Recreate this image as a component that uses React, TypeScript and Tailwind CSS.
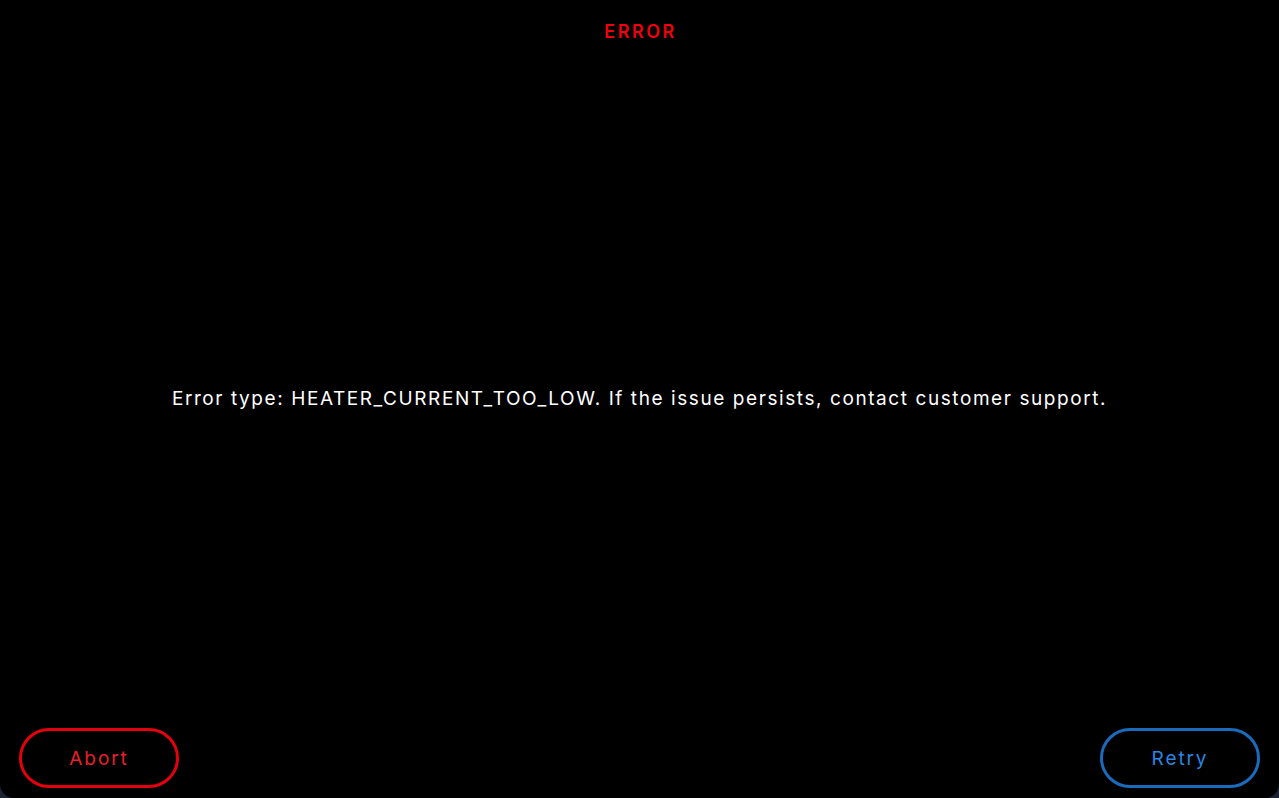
import React from "react";

export default function App() {
  return (
    <div className="w-[1279px] h-[798px] bg-[#1c2433]" style={{ fontFamily: "Inter, 'Noto Sans', sans-serif" }}>
      <div className="w-full h-full bg-black rounded-b-[14px] flex flex-col">
        <div className="h-[62px] flex items-center justify-center">
          <span className="text-[#f0000f] text-[18px] font-semibold tracking-[0.14em] pl-[2px]">ERROR</span>
        </div>
        <div className="flex-1 flex items-center justify-center pt-[8px]">
          <p className="text-white text-[19px] tracking-[0.083em]">
            Error type: HEATER_CURRENT_TOO_LOW. If the issue persists, contact customer support.
          </p>
        </div>
        <div className="flex justify-between items-end px-[19px] pb-[10px]">
          <button className="w-[160px] h-[60px] rounded-full border-[3px] border-[#e3000f] text-[#e8202c] text-[19px] tracking-[0.1em] flex items-center justify-center pt-[3px]">
            Abort
          </button>
          <button className="w-[160px] h-[60px] rounded-full border-[3px] border-[#1b6bbd] text-[#2a86e0] text-[19px] tracking-[0.1em] flex items-center justify-center pt-[3px]">
            Retry
          </button>
        </div>
      </div>
    </div>
  );
}
